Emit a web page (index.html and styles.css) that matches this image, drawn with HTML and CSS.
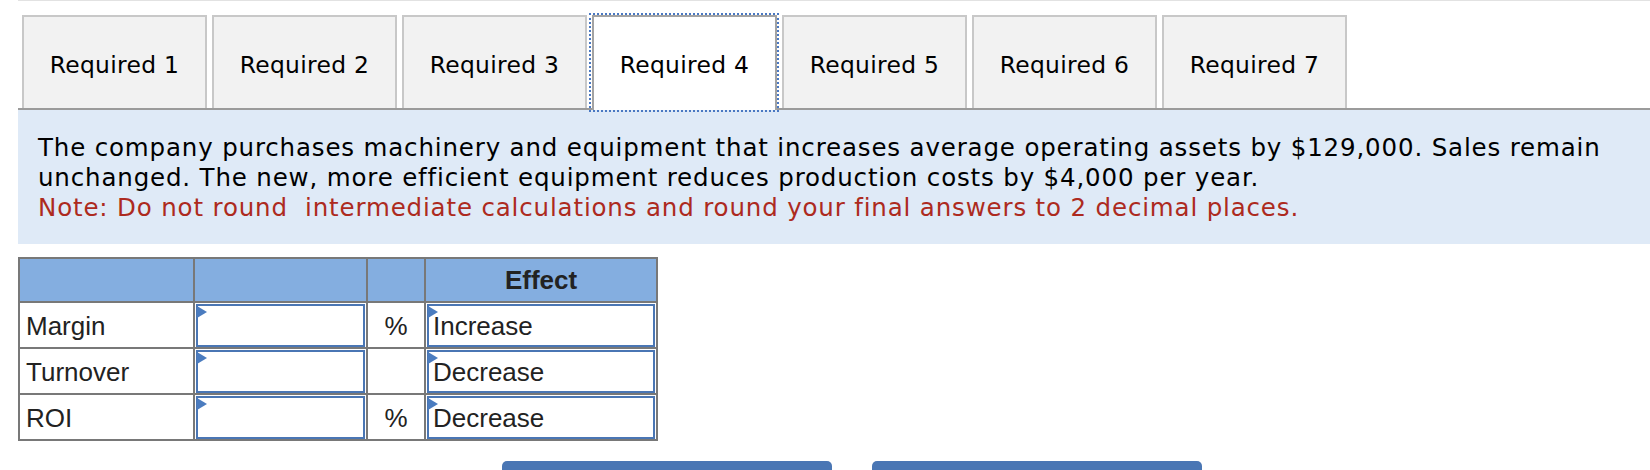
FILE: index.html
```html
<!DOCTYPE html>
<html>
<head>
<meta charset="utf-8">
<link rel="stylesheet" href="styles.css">
</head>
<body>
<div class="page">
  <div class="tabbar">
    <div class="tab">Required 1</div>
    <div class="tab">Required 2</div>
    <div class="tab">Required 3</div>
    <div class="tab active">Required 4</div>
    <div class="tab">Required 5</div>
    <div class="tab">Required 6</div>
    <div class="tab">Required 7</div>
  </div>
  <div class="panel">
    <p class="q">The company purchases machinery and equipment that increases average operating assets by $129,000. Sales remain unchanged. The new, more efficient equipment reduces production costs by $4,000 per year.</p>
    <p class="note">Note: Do not round &nbsp;intermediate calculations and round your final answers to 2 decimal places.</p>
  </div>
  <table class="grid">
    <colgroup>
      <col class="c1"><col class="c2"><col class="c3"><col class="c4">
    </colgroup>
    <thead>
      <tr><th></th><th></th><th></th><th>Effect</th></tr>
    </thead>
    <tbody>
      <tr>
        <td class="label">Margin</td>
        <td class="inp"><div class="box"></div></td>
        <td class="pct">%</td>
        <td class="inp"><div class="box sel">Increase</div></td>
      </tr>
      <tr>
        <td class="label">Turnover</td>
        <td class="inp"><div class="box"></div></td>
        <td class="pct"></td>
        <td class="inp"><div class="box sel">Decrease</div></td>
      </tr>
      <tr>
        <td class="label">ROI</td>
        <td class="inp"><div class="box"></div></td>
        <td class="pct">%</td>
        <td class="inp"><div class="box sel">Decrease</div></td>
      </tr>
    </tbody>
  </table>
  <div class="buttons">
    <div class="btn"></div>
    <div class="btn"></div>
  </div>
</div>
</body>
</html>
```
FILE: styles.css
```css
html, body {
  margin: 0;
  padding: 0;
  overflow: hidden;
  background: #fff;
}
.page {
  margin-left: 18px;
  border-top: 1px solid #e2e2e2;
  font-family: "DejaVu Sans", Verdana, sans-serif;
  color: #000;
}
.tabbar {
  display: flex;
  align-items: flex-end;
  gap: 5px;
  padding: 14px 0 0 4px;
  border-bottom: 2px solid #9b9b9b;
}
.tab {
  box-sizing: border-box;
  width: 185px;
  height: 93px;
  border: 2px solid #c8c8c8;
  border-bottom: 0;
  background: #f2f2f2;
  display: flex;
  align-items: center;
  justify-content: center;
  font-size: 23.4px;
  letter-spacing: 0.3px;
  padding-top: 4px;
}
.tab.active {
  background: #fff;
  border-color: #a3a3a3;
  height: 95px;
  margin-bottom: -2px;
  padding-top: 4px;
  padding-bottom: 2px;
  position: relative;
  z-index: 1;
}
.tab.active::after {
  content: "";
  position: absolute;
  top: -4px;
  left: -5px;
  right: -4px;
  bottom: -2px;
  border: 2px dotted #4a78c2;
  pointer-events: none;
}
.panel {
  background: #dfeaf7;
  padding: 23px 20px 21px 20px;
  font-size: 24.5px;
  letter-spacing: 0.84px;
  line-height: 30px;
}
.panel p {
  margin: 0;
}
.note {
  color: #ad2a20;
}
.grid {
  margin-top: 13px;
  border-collapse: collapse;
  table-layout: fixed;
  width: 640px;
  font-family: "Liberation Sans", Arial, sans-serif;
  font-size: 26px;
  color: #222;
}
.c1 { width: 175px; }
.c2 { width: 173px; }
.c3 { width: 58px; }
.c4 { width: 232px; }
.grid th, .grid td {
  border: 2px solid #787878;
  height: 44px;
  padding: 0;
  box-sizing: border-box;
}
.grid th {
  background: #84aee0;
  font-weight: bold;
  text-align: center;
  vertical-align: middle;
}
.grid td {
  vertical-align: middle;
}
.grid td.label {
  padding: 3px 0 0 6px;
}
.grid td.pct {
  text-align: center;
  padding-top: 3px;
}
.grid td.inp {
  padding: 1px 1px 0 1px;
}
.box {
  box-sizing: border-box;
  height: 43px;
  border: 2px solid #4a76b4;
  position: relative;
  line-height: 40px;
  padding-left: 4px;
  background: #fff;
}
.box::before {
  content: "";
  position: absolute;
  top: 0;
  left: -1px;
  width: 0;
  height: 0;
  border-left: 10px solid #4b7cbf;
  border-top: 6.5px solid transparent;
  border-bottom: 6.5px solid transparent;
}
.buttons {
  display: flex;
  gap: 40px;
  margin-top: 20px;
  padding-left: 484px;
}
.btn {
  width: 330px;
  height: 40px;
  background: #4a76b4;
  border-radius: 5px;
}
```
